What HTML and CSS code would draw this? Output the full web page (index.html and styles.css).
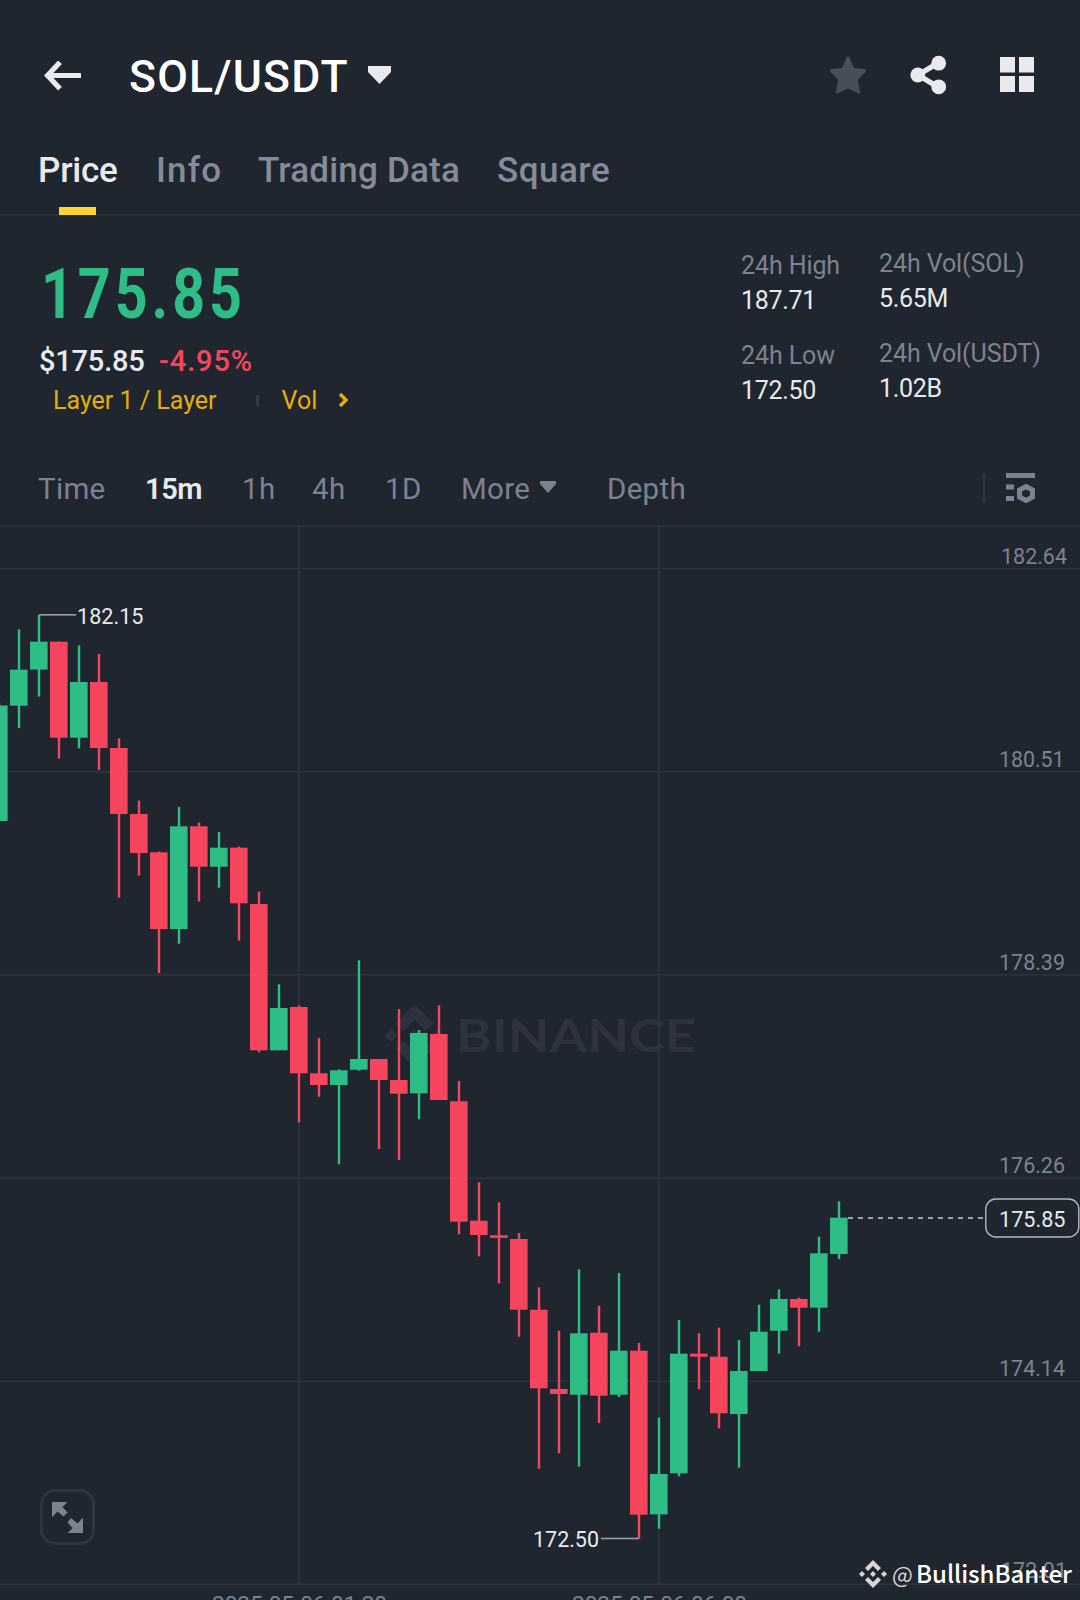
FILE: index.html
```html
<!DOCTYPE html>
<html lang="en">
<head>
    <meta charset="utf-8">
    <title>SOL/USDT</title>
    <link rel="stylesheet" href="styles.css">
</head>
<body>
    <header class="header">
        <a class="back" href="#">
            <svg width="38" height="30" viewBox="0 0 38 30">
                <path d="M37 14.500H5M16 1.300L3.500 14.500L16 27.700" fill="none" stroke="#e8ebee" stroke-width="5.200"/>
            </svg>
        </a>
        <h1 class="pair">SOL/USDT</h1>
        <svg class="pair-caret" width="23" height="18" viewBox="0 0 23 18">
            <path d="M0 0H23V6L11.5 18L0 6Z" fill="#e8ebee"/>
        </svg>
        <div class="actions">
            <svg width="38" height="40" viewBox="0 0 38 40">
                <path d="M19 2.500L24 14L36 15.500L27.500 24.500L30 37.500L19 32L8 37.500L10.500 24.500L2 15.500L14 14Z" fill="#474d5a" stroke="#474d5a" stroke-width="2.400" stroke-linejoin="round"/>
            </svg>
            <svg width="37" height="40" viewBox="0 0 37 40">
                <path d="M8 20L28 8M8 20L28 32" stroke="#e8ebee" stroke-width="5.500"/>
                <circle cx="7.800" cy="20" r="7.400" fill="#e8ebee"/>
                <circle cx="28.700" cy="8.200" r="7.400" fill="#e8ebee"/>
                <circle cx="28.700" cy="31.800" r="7.400" fill="#e8ebee"/>
            </svg>
            <svg width="34" height="35" viewBox="0 0 34 35">
                <path d="M0 0H15V15.500H0ZM19 0H34V15.500H19ZM0 19H15V35H0ZM19 19H34V35H19Z" fill="#e8ebee"/>
            </svg>
        </div>
    </header>

    <nav class="tabs">
        <a class="tab tab-price active" href="#">Price</a>
        <a class="tab tab-info" href="#">Info</a>
        <a class="tab tab-trading" href="#">Trading Data</a>
        <a class="tab tab-square" href="#">Square</a>
    </nav>

    <section class="ticker">
        <div class="price-box">
            <div class="last-price">175.85</div>
            <div class="sub-price"><span class="fiat">$175.85</span><span class="change">-4.95%</span></div>
            <div class="tags">
                <a class="tag" href="#">Layer 1 / Layer</a>
                <span class="tag-line"></span>
                <a class="tag" href="#">Vol</a>
                <svg class="tag-arrow" width="11" height="16" viewBox="0 0 11 16">
                    <path d="M2 2L8 8L2 14" fill="none" stroke="#e5ae0b" stroke-width="3.400"/>
                </svg>
            </div>
        </div>
        <div class="stats">
            <div class="stats-col">
                <div class="stat"><span class="label">24h High</span><span class="value">187.71</span></div>
                <div class="stat"><span class="label">24h Low</span><span class="value">172.50</span></div>
            </div>
            <div class="stats-col stats-vol">
                <div class="stat"><span class="label">24h Vol(SOL)</span><span class="value">5.65M</span></div>
                <div class="stat"><span class="label">24h Vol(USDT)</span><span class="value">1.02B</span></div>
            </div>
        </div>
    </section>

    <nav class="intervals">
        <a class="interval time" href="#">Time</a>
        <a class="interval m15 active" href="#">15m</a>
        <a class="interval h1" href="#">1h</a>
        <a class="interval h4" href="#">4h</a>
        <a class="interval d1" href="#">1D</a>
        <a class="interval more" href="#">More<svg class="more-caret" width="16" height="12" viewBox="0 0 16 12"><path d="M0 0H16V3L8 12L0 3Z" fill="#7c828f"/></svg></a>
        <a class="interval depth" href="#">Depth</a>
        <svg class="settings" width="30" height="30" viewBox="0 0 30 30">
            <path d="M0 0H29V5H0ZM0 11.500H8V16.500H0ZM0 23H8V28H0Z" fill="#7c828f"/>
            <path d="M20 13.500L26.500 17V24L20 27.500L13.500 24V17Z" fill="none" stroke="#7c828f" stroke-width="5"/>
        </svg>
    </nav>

    <main class="chart">
        <svg id="chart" class="chart-svg" width="1080" height="1074" viewBox="0 526 1080 1074"></svg>
        <button class="expand" type="button">
            <svg width="31" height="31" viewBox="0 0 31 31">
                <path d="M0 0H15.500L10.500 5L15.500 10.500L11.500 14.500L5.500 9.500L0 15.500ZM31 31H15.500L20.500 26L15.500 20.500L19 16L25.500 21.500L31 15.500Z" fill="#7c828e"/>
            </svg>
        </button>
        <div class="author">
            <svg width="28" height="28" viewBox="0 0 28 28">
                <path d="M14 0L22 8L19 11L14 6L9 11L6 8ZM14 28L22 20L19 17L14 22L9 17L6 20ZM14 11L17 14L14 17L11 14ZM3 11L6 14L3 17L0 14ZM25 11L28 14L25 17L22 14Z" fill="#d5d6d8"/>
            </svg>
            <span class="at">@</span><span class="name">BullishBanter</span>
        </div>
    </main>

    <script src="chart.js"></script>
</body>
</html>
```
FILE: styles.css
```css
body {
    font-family: Roboto, "Liberation Sans", sans-serif;
    margin: 0;
    padding: 0;
    width: 1080px;
    height: 1600px;
    overflow: hidden;
    background-color: #202630;
    color: #e8ebee;
}

a {
    color: inherit;
    text-decoration: none;
}

svg {
    display: block;
    flex: none;
}

.header {
    display: flex;
    align-items: center;
    box-sizing: border-box;
    height: 134px;
    padding: 17px 46px 0 44px;
}

.pair {
    margin: 2px 0 0 47px;
    width: 239px;
    font-size: 44.5px;
    font-weight: 500;
    line-height: 60px;
    letter-spacing: 1.2px;
    color: #ffffff;
}

.pair-caret {
    margin-top: -2px;
}

.actions {
    display: flex;
    align-items: center;
    margin-left: auto;
    margin-top: -2px;
}

.actions svg {
    margin-left: 53px;
}

.actions svg:nth-child(2) {
    margin-left: 43px;
}

.tabs {
    display: flex;
    box-sizing: border-box;
    height: 82px;
    padding-left: 38px;
    border-bottom: 2px solid #2a303b;
}

.tab {
    position: relative;
    height: 80px;
    line-height: 73px;
    font-size: 35px;
    font-weight: 500;
    color: #858b99;
    white-space: nowrap;
}

.tab-price {
    width: 118px;
    letter-spacing: -0.2px;
}

.tab-info {
    width: 102px;
    letter-spacing: 1.2px;
}

.tab-trading {
    width: 239px;
    letter-spacing: 0.2px;
}

.tab-square {
    letter-spacing: 0.5px;
}

.tab.active {
    color: #e8ebee;
}

.tab.active::after {
    content: "";
    position: absolute;
    left: 21px;
    bottom: -1px;
    width: 37px;
    height: 8px;
    background-color: #fcd32f;
}

.ticker {
    display: flex;
    height: 235px;
}

.price-box {
    width: 741px;
    padding-left: 39px;
    box-sizing: border-box;
}

.last-price {
    margin-top: 40px;
    margin-left: 2px;
    height: 76px;
    line-height: 76px;
    font-size: 70px;
    font-weight: 700;
    letter-spacing: 4.8px;
    color: #2ebd85;
    transform: scaleX(0.82);
    transform-origin: left;
}

.sub-price {
    display: flex;
    margin-top: 9px;
    height: 40px;
    line-height: 40px;
    font-size: 29px;
    font-weight: 500;
}

.fiat {
    width: 120px;
    letter-spacing: -0.2px;
}

.change {
    color: #f6465d;
    letter-spacing: 0.9px;
}

.tags {
    display: flex;
    align-items: center;
    height: 38px;
    padding-left: 14px;
    font-size: 25px;
    color: #e5ae0b;
}

.tag-line {
    width: 3px;
    height: 11px;
    margin: 0 23px 0 39px;
    background-color: #333947;
}

.tag-arrow {
    margin-left: 21px;
}

.stats {
    display: flex;
    padding-top: 32px;
    font-size: 25px;
}

.stats-col {
    width: 138px;
}

.stats-vol {
    margin-top: -2px;
    width: 190px;
}

.stat {
    display: flex;
    flex-direction: column;
    height: 90px;
    line-height: 35px;
    white-space: nowrap;
}

.stat .label {
    color: #7c828f;
    letter-spacing: -0.1px;
}

.stat .value {
    letter-spacing: -0.3px;
}

.intervals {
    display: flex;
    align-items: center;
    box-sizing: border-box;
    height: 76px;
    padding: 2px 44px 0 38px;
    font-size: 29.5px;
    letter-spacing: 0.3px;
    color: #7c828f;
    border-bottom: 2px solid #2a303b;
}

.interval {
    white-space: nowrap;
}

.interval.active {
    font-size: 29px;
    letter-spacing: -0.4px;
    font-weight: 600;
    color: #e8ebee;
}

.time {
    width: 107px;
}

.m15 {
    width: 97px;
}

.h1 {
    width: 70px;
}

.h4 {
    width: 73px;
}

.d1 {
    width: 76px;
}

.more {
    display: flex;
    align-items: center;
    width: 146px;
}

.more-caret {
    margin: -5px 0 0 10px;
}

.settings {
    margin-left: auto;
    margin-top: -2px;
    padding-left: 21px;
    border-left: 2px solid #303643;
}

.chart {
    position: relative;
    height: 1074px;
}

.chart-svg {
    margin-top: -1px;
}

.axis-text {
    fill: #7c828f;
    font-size: 22.5px;
}

.mark-text {
    fill: #e8ebee;
    font-size: 22.5px;
}

.watermark {
    fill: #2e323e;
    font-family: Lato, sans-serif;
    font-size: 46px;
    font-weight: 700;
}

.expand {
    position: absolute;
    left: 40px;
    top: 963px;
    width: 55px;
    height: 56px;
    padding: 0;
    display: flex;
    align-items: center;
    justify-content: center;
    background: none;
    border: 3px solid #2e3440;
    border-radius: 15px;
}

.author {
    position: absolute;
    left: 859px;
    top: 1030px;
    display: flex;
    align-items: center;
    height: 36px;
    font-family: "Noto Sans CJK SC", sans-serif;
    font-size: 24px;
    line-height: 34px;
    color: #ffffff;
}

.at,
.name {
    margin-top: -2px;
}

.at {
    width: 24px;
    margin-left: 5px;
    font-size: 22px;
    color: #d5d6d8;
}

.name {
    font-weight: 500;
}
```
FILE: chart.js
```js
const NS = 'http://www.w3.org/2000/svg';
const chart = document.getElementById('chart');
const GREEN = '#2ebd85';
const RED = '#f6465d';
const GRID = '#2d333e';

// up (1) or down (0), wick top, body top, body bottom, wick bottom
const candles = [
    [1, 702, 705.5, 821, 821],
    [1, 629.3, 669.7, 705.7, 728],
    [1, 615, 641.7, 669.5, 696.5],
    [0, 641.7, 641.7, 737.7, 758.7],
    [1, 645.5, 682, 737.7, 748.3],
    [0, 654, 682, 748, 770],
    [0, 738.3, 748, 814, 897.7],
    [0, 800.7, 814, 853, 875.5],
    [0, 851.5, 852.3, 929, 973],
    [1, 807, 826.3, 929, 943.7],
    [0, 822.7, 826.3, 866.7, 901.5],
    [1, 832, 847.7, 866.7, 887.7],
    [0, 846.7, 847.7, 903.3, 940.7],
    [0, 891.7, 904, 1050.3, 1052.3],
    [1, 984.3, 1008, 1050.3, 1050.3],
    [0, 1005.3, 1007, 1073.3, 1122.3],
    [0, 1038, 1073.3, 1085, 1096.7],
    [1, 1069.3, 1070.3, 1085, 1164.3],
    [1, 960.3, 1059, 1069.7, 1070.7],
    [0, 1059, 1059, 1080, 1149],
    [0, 1009, 1080, 1093.7, 1160],
    [1, 1030, 1033, 1093.3, 1119.3],
    [0, 1005.3, 1034, 1100, 1100],
    [0, 1081, 1101.3, 1221.7, 1234.3],
    [0, 1182.3, 1220.7, 1235, 1256.3],
    [0, 1202.3, 1235.3, 1237.9, 1283.3],
    [0, 1233, 1239, 1309.7, 1336.7],
    [0, 1287.3, 1309.7, 1388.3, 1468.7],
    [0, 1330.7, 1389, 1394, 1453.3],
    [1, 1269.3, 1333.3, 1394.7, 1466.7],
    [0, 1305.7, 1332.7, 1395.7, 1423],
    [1, 1273, 1350.7, 1394.7, 1397],
    [0, 1343, 1350.7, 1514.7, 1538.7],
    [1, 1417.7, 1474, 1514.3, 1528.7],
    [1, 1320, 1353.7, 1473.3, 1476.3],
    [0, 1333.3, 1353.7, 1356.7, 1389.3],
    [0, 1327.7, 1356.7, 1413.3, 1428.3],
    [1, 1340, 1371, 1414, 1467.7],
    [1, 1304.7, 1331.7, 1371, 1371],
    [1, 1289.3, 1299, 1330.7, 1353.7],
    [0, 1297.7, 1299, 1307.7, 1346.3],
    [1, 1236.7, 1253.3, 1307.7, 1331.7],
    [1, 1201.3, 1217.7, 1254, 1259]
];

function add(tag, attrs, text) {
    const el = document.createElementNS(NS, tag);
    for (const key in attrs) {
        el.setAttribute(key, attrs[key]);
    }
    if (text) {
        el.textContent = text;
    }
    chart.appendChild(el);
}

function label(cls, x, y, width, text) {
    add('text', { class: cls, x: x, y: y, textLength: width, lengthAdjust: 'spacingAndGlyphs' }, text);
}

// watermark
add('path', {
    d: 'M414.500 1004.500L433.500 1023L426 1031L414.500 1020L403 1031L395.500 1023ZM414.500 1067L433.500 1048.500L426 1040.500L414.500 1051.500L403 1040.500L395.500 1048.500ZM414.500 1029L421 1035.500L414.500 1042L408 1035.500ZM391 1029L397.500 1035.500L391 1042L384.500 1035.500ZM438 1029L444.500 1035.500L438 1042L431.500 1035.500Z',
    fill: '#2e323e'
});
label('watermark', 456, 1052, 240, 'BINANCE');

// grid
for (const y of [569, 772, 975, 1178.4, 1381.4, 1584.4]) {
    add('rect', { x: 0, y: y - 1, width: 1080, height: 1.6, fill: GRID });
}
for (const x of [299, 659]) {
    add('rect', { x: x - 1, y: 526, width: 1.8, height: 1058, fill: GRID });
}

// candles
candles.forEach(function (c, i) {
    const x = i * 20 - 1;
    const color = c[0] ? GREEN : RED;
    add('rect', { x: x - 1.2, y: c[1], width: 2.4, height: c[4] - c[1], fill: color });
    add('rect', { x: x - 9, y: c[2], width: 17.6, height: c[3] - c[2], fill: color });
});

// price axis
label('axis-text', 1001, 563.5, 66, '182.64');
label('axis-text', 999, 766.5, 65.5, '180.51');
label('axis-text', 999, 970.4, 66, '178.39');
label('axis-text', 999, 1173.4, 66, '176.26');
label('axis-text', 999, 1376.4, 66, '174.14');
label('axis-text', 1001, 1577.5, 66, '172.01');

// time axis
label('axis-text', 212, 1612, 175, '2025-05-06 01:30');
label('axis-text', 572, 1612, 175, '2025-05-06 06:00');

// high and low
add('rect', { x: 39, y: 614, width: 37, height: 1.6, fill: '#9aa0ac' });
label('mark-text', 77, 623.5, 66.5, '182.15');
add('rect', { x: 601, y: 1537.7, width: 38, height: 1.6, fill: '#9aa0ac' });
label('mark-text', 533, 1547.3, 66, '172.50');

// last price
add('path', { d: 'M848 1218H984', stroke: '#9aa0ac', 'stroke-width': 1.8, 'stroke-dasharray': '5 5' });
add('rect', { x: 985.8, y: 1199, width: 93, height: 38, rx: 10, fill: '#202630', stroke: '#b4b8c0', 'stroke-width': 1.4 });
label('mark-text', 999, 1226.5, 66.5, '175.85');
```
